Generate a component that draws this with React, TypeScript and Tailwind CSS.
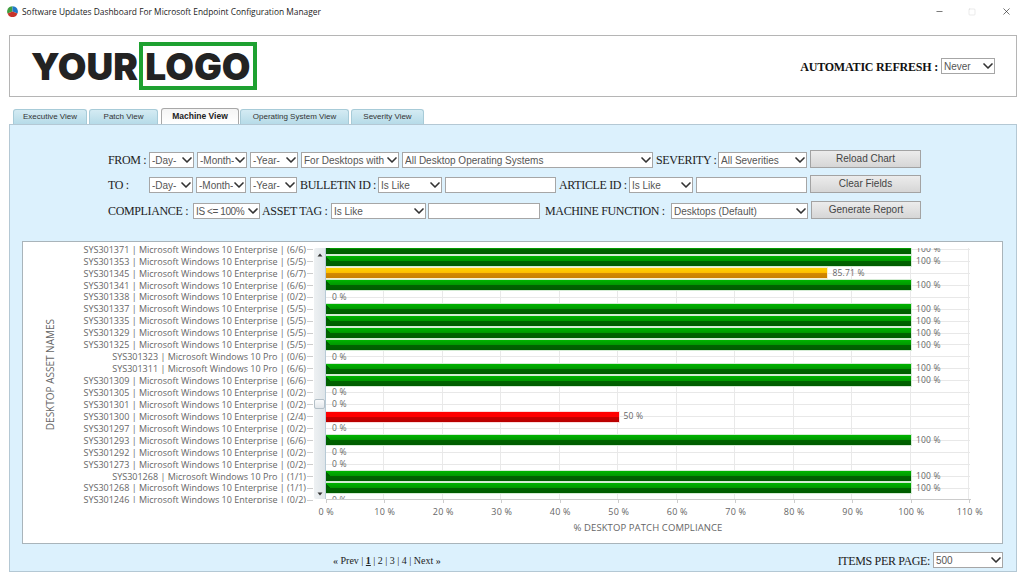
import { ChevronDown, Minus, Square, X } from 'lucide-react'

type Row = { id: string; os: 'Enterprise' | 'Pro'; count: string; pct: number }

const rows: Row[] = [
  { id: 'SYS301371', os: 'Enterprise', count: '6/6', pct: 100 },
  { id: 'SYS301353', os: 'Enterprise', count: '5/5', pct: 100 },
  { id: 'SYS301345', os: 'Enterprise', count: '6/7', pct: 85.71 },
  { id: 'SYS301341', os: 'Enterprise', count: '6/6', pct: 100 },
  { id: 'SYS301338', os: 'Enterprise', count: '0/2', pct: 0 },
  { id: 'SYS301337', os: 'Enterprise', count: '5/5', pct: 100 },
  { id: 'SYS301335', os: 'Enterprise', count: '5/5', pct: 100 },
  { id: 'SYS301329', os: 'Enterprise', count: '5/5', pct: 100 },
  { id: 'SYS301325', os: 'Enterprise', count: '5/5', pct: 100 },
  { id: 'SYS301323', os: 'Pro', count: '0/6', pct: 0 },
  { id: 'SYS301311', os: 'Pro', count: '6/6', pct: 100 },
  { id: 'SYS301309', os: 'Enterprise', count: '6/6', pct: 100 },
  { id: 'SYS301305', os: 'Enterprise', count: '0/2', pct: 0 },
  { id: 'SYS301301', os: 'Enterprise', count: '0/2', pct: 0 },
  { id: 'SYS301300', os: 'Enterprise', count: '2/4', pct: 50 },
  { id: 'SYS301297', os: 'Enterprise', count: '0/2', pct: 0 },
  { id: 'SYS301293', os: 'Enterprise', count: '6/6', pct: 100 },
  { id: 'SYS301292', os: 'Enterprise', count: '0/2', pct: 0 },
  { id: 'SYS301273', os: 'Enterprise', count: '0/2', pct: 0 },
  { id: 'SYS301268', os: 'Pro', count: '1/1', pct: 100 },
  { id: 'SYS301268', os: 'Enterprise', count: '1/1', pct: 100 },
  { id: 'SYS301246', os: 'Enterprise', count: '0/2', pct: 0 },
]

const ticks = [0, 10, 20, 30, 40, 50, 60, 70, 80, 90, 100, 110]
const tabs = [
  { label: 'Executive View', cls: 'w-[74px]' },
  { label: 'Patch View', cls: 'ml-[2px] w-[69px]' },
  { label: 'Machine View', cls: 'ml-[3px] w-[78px]', active: true },
  { label: 'Operating System View', cls: 'ml-[1px] w-[109px]' },
  { label: 'Severity View', cls: 'ml-[2px] w-[73px]' },
]

function barColor(pct: number) {
  if (pct >= 100)
    return '[background:linear-gradient(to_top_right,#006000_50%,transparent_50%)_0_0/4px_5px_no-repeat,linear-gradient(#00b400_0%,#009a00_45%,#006400_50%,#005c00_100%)] shadow-[0_0_0_1px_#d4ecd4]'
  if (pct >= 80) return 'bg-[linear-gradient(#ffd400_0%,#ffbe00_45%,#d58a00_50%,#c87f00_100%)] shadow-[0_0_0_1px_#fbeecd]'
  return 'bg-[linear-gradient(#ff0000_0%,#ff0000_45%,#c80000_50%,#b80000_100%)] shadow-[0_0_0_1px_#fbdcdc]'
}

function Sel({ cls, text, tight }: { cls: string; text: string; tight?: boolean }) {
  return (
    <div className={`${cls} relative h-[16px] shrink-0`}>
      <select
        defaultValue={text}
        className={`${tight ? 'tracking-[-.4px]' : ''} block h-full w-full appearance-none border border-[#a6a6a6] bg-white pr-[12px] pl-[2px] font-['Liberation_Sans',sans-serif] text-[10px] text-[#555]`}
      >
        <option>{text}</option>
      </select>
      <ChevronDown size={16} strokeWidth={2.5} className="pointer-events-none absolute top-0 -right-[1px] text-[#333]" />
    </div>
  )
}

function Field({ cls }: { cls: string }) {
  return <input type="text" className={`${cls} h-[16px] shrink-0 border border-[#a6a6a6] bg-white`} />
}

function Label({ cls, children }: { cls: string; children: string }) {
  return <span className={`${cls} h-[16px] shrink-0 text-[12px] leading-[17px] tracking-[-.35px] whitespace-nowrap text-[#222]`}>{children}</span>
}

function Btn({ cls, children }: { cls: string; children: string }) {
  return (
    <button className={`${cls} h-[18px] shrink-0 border border-[#a3a3a3] bg-[linear-gradient(#ececec,#d6d6d6)] pb-[1px] font-['Liberation_Sans',sans-serif] text-[10px] text-[#444]`}>
      {children}
    </button>
  )
}

function Chart() {
  return (
    <div className="mt-[22px] ml-[12px] flex h-[303px] w-[981px] border border-[#a9b4ba] bg-white font-['Open_Sans',sans-serif] text-[#666]">
      {/* axis title */}
      <div className="flex w-[35px] shrink-0 items-center justify-end pb-[36px]">
        <span className="rotate-180 text-[10px] whitespace-nowrap [writing-mode:vertical-rl]">DESKTOP ASSET NAMES</span>
      </div>

      {/* asset names */}
      <div className="mt-[3px] ml-[2px] h-[258px] w-[253px] shrink-0 overflow-hidden">
        <div className="-mt-[1.5px]">
          {rows.map((r, i) => (
            <div key={i} className="flex h-[11.95px] items-center justify-end text-[9px] whitespace-nowrap">
              <span>{`${r.id} | Microsoft Windows 10 ${r.os} | (${r.count})`}</span>
              <span className="ml-[1px] h-px w-[6px] bg-[#ccc]" />
            </div>
          ))}
        </div>
      </div>

      {/* scrollbar */}
      <div className="mt-[6px] ml-[1px] flex h-[251px] w-[12px] shrink-0 flex-col items-center rounded-l-[2px] border-r border-[#b7cad6] bg-[linear-gradient(90deg,#eef1f3,#dfe5e9)]">
        <svg width="6" height="4" viewBox="0 0 6 4" className="mt-[5px] fill-[#333]"><path d="M3 0.5 5.5 3.5H.5z" /></svg>
        <div className="mt-[142px] h-[10px] w-[11px] rounded-[2px] border border-[#b4c0c8] bg-[linear-gradient(#fafbfc,#e1e6ea)]" />
        <svg width="6" height="4" viewBox="0 0 6 4" className="mt-[83px] fill-[#333]"><path d="M3 3.5 5.5 .5H.5z" /></svg>
      </div>

      {/* plot */}
      <div className="mt-[6px] w-[660px] shrink-0">
        <div className="h-[251px] w-[644px] overflow-hidden bg-[repeating-linear-gradient(90deg,transparent_0,transparent_57.5px,#e9e9e9_57.5px,#e9e9e9_58.5px)]">
          <div className="-mt-[4.5px]">
            {rows.map((r, i) => (
              <div key={i} className="flex h-[11.95px] items-center bg-[linear-gradient(#e8e8e8,#e8e8e8)] bg-[length:100%_1px] bg-center bg-no-repeat">
                {r.pct > 0 && <div className={`h-[10px] ${barColor(r.pct)}`} style={{ width: r.pct * 5.85 }} />}
                <span className={`${r.pct > 0 ? 'ml-[5px]' : 'ml-[6px]'} text-[8.5px] tracking-[.2px] whitespace-nowrap`}>{r.pct} %</span>
              </div>
            ))}
          </div>
        </div>
        <div className="h-[4px] w-[645px] border-t border-[#ccc] bg-[repeating-linear-gradient(90deg,#ccc_0,#ccc_1px,transparent_1px,transparent_58.5px)]" />
        <div className="mt-[2px] -ml-[29px] flex h-[14px]">
          {ticks.map((t) => (
            <span key={t} className="w-[58.5px] shrink-0 text-center text-[9px] tracking-[.2px]">{t} %</span>
          ))}
        </div>
        <div className="mt-[2px] w-[644px] text-center text-[9.5px] tracking-[.1px]">% DESKTOP PATCH COMPLIANCE</div>
      </div>
    </div>
  )
}

export default function App() {
  return (
    <div className="flex h-[585px] w-[1024px] flex-col overflow-hidden bg-white font-['Liberation_Serif',serif]">
      {/* title bar */}
      <div className="flex h-[35px] shrink-0 items-start pt-[6px] pl-[7px]">
        <svg width="11" height="11" viewBox="0 0 22 22" className="shrink-0">
          <path d="M11 11 1 15A10.5 10.5 0 0 1 11 .5z" fill="#3f9e3f" />
          <path d="M11 11V.5A10.5 10.5 0 0 1 21 15z" fill="#1f78c8" />
          <path d="M11 11 21 15A10.5 10.5 0 0 1 1 15z" fill="#c8342c" />
        </svg>
        <span className="-mt-[1px] ml-[4px] font-['Open_Sans',sans-serif] text-[8.4px] leading-[13px] text-[#222]">
          Software Updates Dashboard For Microsoft Endpoint Configuration Manager
        </span>
        <div className="ml-auto flex items-center pr-[12px]">
          <Minus size={9} strokeWidth={1.6} className="text-[#222]" />
          <Square size={8} strokeWidth={1.2} className="ml-[24px] text-[#ccc]" />
          <X size={11} strokeWidth={1.4} className="ml-[25px] text-[#222]" />
        </div>
      </div>

      {/* logo + refresh */}
      <div className="ml-[9px] flex h-[62px] w-[1008px] shrink-0 items-center border border-[#b5b5b5] pr-[21px] pl-[21px]">
        <span className="font-['Inter',sans-serif] text-[37px] leading-none font-black text-[#232323]">YOUR</span>
        <div className="ml-[1px] flex h-[48px] w-[118px] items-center justify-center border-4 border-[#1ea131]">
          <span className="font-['Inter',sans-serif] text-[37px] leading-none font-black text-[#232323]">LOGO</span>
        </div>
        <span className="mt-[1px] ml-auto text-[12px] font-bold tracking-[-.2px] text-[#111]">AUTOMATIC REFRESH :</span>
        <Sel cls="ml-[3px] w-[54px]" text="Never" />
      </div>

      {/* tabs */}
      <div className="mt-[11px] ml-[13px] flex h-[16px] shrink-0 items-end font-['Liberation_Sans',sans-serif] text-[8px] text-[#333]">
        {tabs.map((t) => (
          <div
            key={t.label}
            className={
              t.active
                ? `${t.cls} flex h-[16px] items-center justify-center rounded-t-[3px] border border-b-0 border-[#a8a8a8] bg-[linear-gradient(#f4f4f4,#fff)] pb-[1px] text-[8.5px] font-bold text-[#222]`
                : `${t.cls} flex h-[15px] items-center justify-center rounded-t-[3px] border border-b-0 border-[#a7cbd8] bg-[linear-gradient(#d4ebf3,#b6dbe8)]`
            }
          >
            {t.label}
          </div>
        ))}
      </div>

      {/* panel */}
      <div className="ml-[9px] flex h-[448px] w-[1008px] shrink-0 flex-col border border-[#b4c8d4] bg-[#dcf1fd]">
        <div className="mt-[25px] ml-[98px] flex h-[18px] items-end">
          <Label cls="w-[41px]">FROM :</Label>
          <Sel cls="w-[45px]" text="-Day-" />
          <Sel cls="ml-[3px] w-[50px]" text="-Month-" />
          <Sel cls="ml-[3px] w-[48px]" text="-Year-" />
          <Sel cls="ml-[3px] w-[98px]" text="For Desktops with" />
          <Sel cls="ml-[3px] w-[251px]" text="All Desktop Operating Systems" />
          <Label cls="ml-[3px] w-[62px]">SEVERITY :</Label>
          <Sel cls="w-[89px]" text="All Severities" />
          <Btn cls="ml-[3px] w-[111px]">Reload Chart</Btn>
        </div>
        <div className="mt-[7px] ml-[98px] flex h-[18px] items-end">
          <Label cls="w-[41px]">TO :</Label>
          <Sel cls="w-[44px]" text="-Day-" />
          <Sel cls="ml-[3px] w-[50px]" text="-Month-" />
          <Sel cls="ml-[4px] w-[47px]" text="-Year-" />
          <Label cls="ml-[3px] w-[78px]">BULLETIN ID :</Label>
          <Sel cls="w-[64px]" text="Is Like" />
          <Field cls="ml-[3px] w-[111px]" />
          <Label cls="ml-[3px] w-[70px]">ARTICLE ID :</Label>
          <Sel cls="w-[64px]" text="Is Like" />
          <Field cls="ml-[3px] w-[111px]" />
          <Btn cls="ml-[3px] w-[111px]">Clear Fields</Btn>
        </div>
        <div className="mt-[8px] ml-[98px] flex h-[18px] items-end">
          <Label cls="w-[85px]">COMPLIANCE :</Label>
          <Sel cls="w-[67px]" text="IS <= 100%" tight />
          <Label cls="ml-[2px] w-[69px]">ASSET TAG :</Label>
          <Sel cls="w-[95px]" text="Is Like" />
          <Field cls="ml-[2px] w-[112px]" />
          <Label cls="ml-[5px] w-[126px]">MACHINE FUNCTION :</Label>
          <Sel cls="w-[137px]" text="Desktops (Default)" />
          <Btn cls="ml-[3px] w-[110px]">Generate Report</Btn>
        </div>

        <Chart />

        {/* pagination */}
        <div className="mt-[8px] flex h-[16px] items-center">
          <div className="mt-[1px] ml-[323px] text-[10px] whitespace-nowrap text-[#222]">
            « Prev | <b className="underline">1</b> | 2 | 3 | 4 | Next »
          </div>
          <span className="mt-[1px] ml-auto text-[12px] tracking-[-.35px] text-[#222]">ITEMS PER PAGE:</span>
          <Sel cls="mr-[13px] ml-[3px] w-[70px]" text="500" />
        </div>
      </div>
    </div>
  )
}
